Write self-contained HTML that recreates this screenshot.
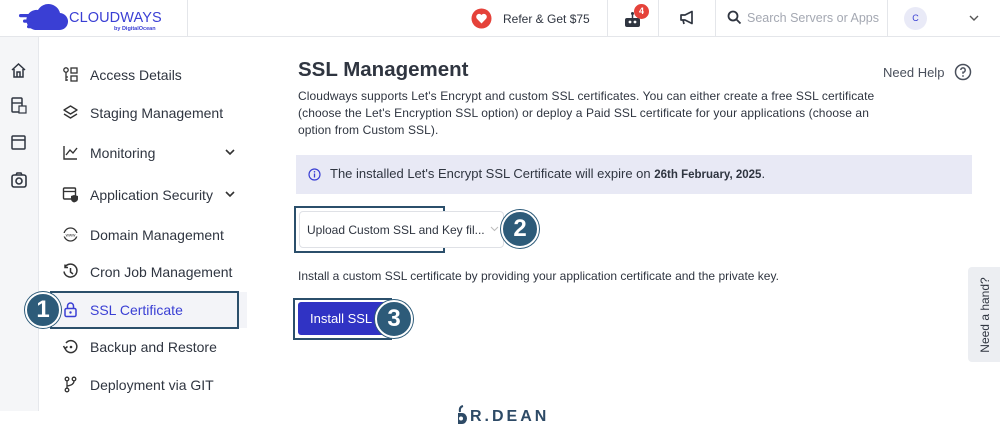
<!DOCTYPE html>
<html><head><style>
*{box-sizing:border-box;margin:0;padding:0}
body{width:1000px;height:443px;background:#fff;font-family:"Liberation Sans",sans-serif;color:#2f3540;position:relative;overflow:hidden}
.abs{position:absolute}
.hdr{left:0;top:0;width:1000px;height:37px;border-bottom:1px solid #e4e6ea;background:#fff}
.vd{top:0;width:1px;height:37px;background:#e4e6ea}
.side{left:0;top:37px;width:39px;height:374px;background:#f5f6f8;border-right:1px solid #e6e8ec}
.mi{left:62px;font-size:14px;color:#2f3540;display:flex;align-items:center}
.mi svg{width:17px;height:17px;margin-right:11px}
.num{border-radius:50%;background:#2d5b79;color:#fff;font-weight:bold;border:2px solid #fff;box-shadow:0 0 0 1px #2d5b79;display:flex;align-items:center;justify-content:center;font-size:24px}
p.t{font-size:12px;line-height:17px;color:#2f3540;letter-spacing:.1px}
</style></head><body>
<div class="abs hdr"></div>
<!-- logo -->
<svg class="abs" style="left:18px;top:4px" width="50" height="28" viewBox="0 0 50 28"><path d="M17 26 H41 a8.5 8.5 0 0 0 1-17 a12 12 0 0 0-22-3 a9 9 0 0 0-3 20z" fill="#3a3fd4"/><rect x="1" y="10" width="18" height="3.2" rx="1.6" fill="#3a3fd4"/><rect x="5" y="15.5" width="14" height="3.2" rx="1.6" fill="#3a3fd4"/><rect x="9" y="21" width="10" height="3.2" rx="1.6" fill="#3a3fd4"/></svg>
<div class="abs" style="left:69px;top:10px;font-size:14.5px;color:#3a3fd4;letter-spacing:.1px">CLOUDWAYS</div>
<div class="abs" style="left:114px;top:26px;font-size:5.5px;color:#3a3fd4;font-weight:bold">by DigitalOcean</div>
<div class="abs vd" style="left:187px"></div>
<svg class="abs" style="left:471px;top:8px" width="21" height="21" viewBox="0 0 21 21"><circle cx="10.5" cy="10.5" r="10" fill="#e5423a"/><path d="M10.5 15.5 L5.8 10.6 a2.8 2.8 0 0 1 4.7-3.6 a2.8 2.8 0 0 1 4.7 3.6z" fill="#fff"/></svg>
<div class="abs" style="left:503px;top:12px;font-size:12px;color:#2f3540">Refer &amp; Get $75</div>
<div class="abs vd" style="left:607px"></div>
<svg class="abs" style="left:623px;top:10px" width="20" height="20" viewBox="0 0 20 20"><rect x="2" y="8" width="15" height="9" rx="2" fill="#2f3540"/><circle cx="7" cy="12" r="1.4" fill="#fff"/><circle cx="12" cy="12" r="1.4" fill="#fff"/><line x1="9.5" y1="8" x2="9.5" y2="4" stroke="#2f3540" stroke-width="1.5"/><circle cx="9.5" cy="3.5" r="1.5" fill="#2f3540"/></svg>
<div class="abs" style="left:634px;top:4px;width:15px;height:15px;border-radius:50%;background:#e5423a;color:#fff;font-size:9px;font-weight:bold;text-align:center;line-height:15px">4</div>
<div class="abs vd" style="left:658px"></div>
<svg class="abs" style="left:679px;top:10px" width="17" height="16" viewBox="0 0 17 16"><path d="M2 5 H6 L13 1.5 V13.5 L6 10 H2z M4 10 L5 14" fill="none" stroke="#2f3540" stroke-width="1.7" stroke-linejoin="round"/></svg>
<div class="abs vd" style="left:715px"></div>
<svg class="abs" style="left:727px;top:10px" width="15" height="15" viewBox="0 0 15 15"><circle cx="6" cy="6" r="4.5" fill="none" stroke="#2f3540" stroke-width="1.8"/><line x1="9.5" y1="9.5" x2="13.5" y2="13.5" stroke="#2f3540" stroke-width="1.8"/></svg>
<div class="abs" style="left:747px;top:11px;font-size:12.5px;color:#a4a8b2">Search Servers or Apps</div>
<div class="abs vd" style="left:887px"></div>
<div class="abs" style="left:904px;top:7px;width:23px;height:23px;border-radius:50%;background:#e9eaf7;color:#3a3fd4;font-size:9px;text-align:center;line-height:23px">C</div>
<svg class="abs" style="left:969px;top:15px" width="10" height="7" viewBox="0 0 10 7"><path d="M1 1 L5 5 L9 1" fill="none" stroke="#555" stroke-width="1.4"/></svg>

<div class="abs side"></div>
<svg class="abs" style="left:10px;top:62px" width="17" height="17" viewBox="0 0 17 17"><path d="M2 8 L8.5 2 L15 8 M4 7 V15 H13 V7 M7 15 V10 H10 V15" fill="none" stroke="#2f3540" stroke-width="1.5"/></svg>
<svg class="abs" style="left:10px;top:96px" width="17" height="18" viewBox="0 0 17 18"><rect x="2" y="2" width="10" height="14" rx="1" fill="none" stroke="#2f3540" stroke-width="1.5"/><line x1="2" y1="7" x2="12" y2="7" stroke="#2f3540" stroke-width="1.4"/><rect x="9" y="10" width="7" height="7" fill="#f5f6f8" stroke="#2f3540" stroke-width="1.2"/></svg>
<svg class="abs" style="left:10px;top:133px" width="17" height="18" viewBox="0 0 17 18"><rect x="2" y="3" width="13" height="13" rx="1" fill="none" stroke="#2f3540" stroke-width="1.5"/><line x1="2" y1="7" x2="15" y2="7" stroke="#2f3540" stroke-width="1.5"/></svg>
<svg class="abs" style="left:10px;top:171px" width="18" height="18" viewBox="0 0 18 18"><rect x="2" y="4" width="14" height="12" rx="2" fill="none" stroke="#2f3540" stroke-width="1.6"/><circle cx="9" cy="10" r="3" fill="none" stroke="#2f3540" stroke-width="1.6"/><path d="M6 4 L7 2 H11 L12 4" fill="none" stroke="#2f3540" stroke-width="1.5"/></svg>

<!-- menu -->
<div class="abs" style="left:48px;top:292px;width:199px;height:36px;background:#f3f4f8"></div>
<div class="abs" style="left:50px;top:291px;width:189px;height:38px;border:2px solid #2b4f6b"></div>
<div class="abs mi" style="top:66px"><svg viewBox="0 0 17 17"><circle cx="4" cy="4" r="2.2" fill="none" stroke="#333" stroke-width="1.3"/><path d="M4 6 V15 M4 11 H6 M4 14 H6" stroke="#333" stroke-width="1.3"/><rect x="9" y="2" width="6" height="5" fill="none" stroke="#333" stroke-width="1.3"/><rect x="9" y="10" width="6" height="5" fill="none" stroke="#333" stroke-width="1.3"/></svg>Access Details</div>
<div class="abs mi" style="top:104px"><svg viewBox="0 0 17 17"><path d="M8.5 2 L15 6 L8.5 10 L2 6z M2 10 L8.5 14 L15 10" fill="none" stroke="#333" stroke-width="1.4" stroke-linejoin="round"/></svg>Staging Management</div>
<div class="abs mi" style="top:144px"><svg viewBox="0 0 17 17"><path d="M2 2 V15 H15 M4 11 L8 6 L11 9 L15 4" fill="none" stroke="#333" stroke-width="1.4"/></svg>Monitoring</div>
<svg class="abs" style="left:225px;top:149px" width="10" height="7" viewBox="0 0 10 7"><path d="M1 1 L5 5 L9 1" fill="none" stroke="#333" stroke-width="1.6"/></svg>
<div class="abs mi" style="top:186px"><svg viewBox="0 0 17 17"><rect x="1.5" y="2" width="12" height="11" rx="1" fill="none" stroke="#333" stroke-width="1.4"/><line x1="1.5" y1="5.5" x2="13.5" y2="5.5" stroke="#333" stroke-width="1.3"/><path d="M12 9 L16 10 V13 Q16 15.5 12 16.5 Q9 15.5 9 13 V10z" fill="#333"/></svg>Application Security</div>
<svg class="abs" style="left:225px;top:191px" width="10" height="7" viewBox="0 0 10 7"><path d="M1 1 L5 5 L9 1" fill="none" stroke="#333" stroke-width="1.6"/></svg>
<div class="abs mi" style="top:226px"><svg viewBox="0 0 17 17"><circle cx="8.5" cy="8.5" r="6.5" fill="none" stroke="#333" stroke-width="1.3"/><rect x="0" y="7" width="17" height="3.5" fill="#fff"/><text x="8.5" y="10.3" font-size="4.5" text-anchor="middle" fill="#333" font-family="Liberation Sans">www</text></svg>Domain Management</div>
<div class="abs mi" style="top:263px"><svg viewBox="0 0 17 17"><path d="M3 4 A6.5 6.5 0 1 1 2 8.5 M3 1.5 V4.5 H6 M8.5 5 V9 L11 11" fill="none" stroke="#333" stroke-width="1.5"/></svg>Cron Job Management</div>
<div class="abs mi" style="top:301px;color:#3a3fd4"><svg viewBox="0 0 17 17"><rect x="3" y="7.5" width="11" height="8" rx="1.5" fill="none" stroke="#3a3fd4" stroke-width="1.5"/><path d="M5.5 7.5 V5 a3 3 0 0 1 6 0 V7.5" fill="none" stroke="#3a3fd4" stroke-width="1.5"/><circle cx="8.5" cy="11.5" r="1.2" fill="#3a3fd4"/></svg>SSL Certificate</div>
<div class="abs mi" style="top:338px"><svg viewBox="0 0 17 17"><path d="M3 10 A6 6 0 1 0 4 5 M1.5 8 L3 10.5 L5.5 8.5" fill="none" stroke="#333" stroke-width="1.5"/><circle cx="9" cy="9" r="1.3" fill="#333"/></svg>Backup and Restore</div>
<div class="abs mi" style="top:376px"><svg viewBox="0 0 17 17"><circle cx="5" cy="3" r="1.8" fill="none" stroke="#333" stroke-width="1.3"/><circle cx="5" cy="14" r="1.8" fill="none" stroke="#333" stroke-width="1.3"/><circle cx="12" cy="3" r="1.8" fill="none" stroke="#333" stroke-width="1.3"/><path d="M5 5 V12 M12 5 Q12 9 5 10" fill="none" stroke="#333" stroke-width="1.3"/></svg>Deployment via GIT</div>
<div class="abs num" style="left:25px;top:292px;width:36px;height:36px">1</div>

<!-- main -->
<div class="abs" style="left:298px;top:58px;font-size:20.5px;font-weight:bold;color:#2f3540">SSL Management</div>
<div class="abs" style="left:883px;top:65px;font-size:13px;color:#4a505c">Need Help</div>
<svg class="abs" style="left:954px;top:63px" width="18" height="18" viewBox="0 0 18 18"><circle cx="9" cy="9" r="7.5" fill="none" stroke="#4a505c" stroke-width="1.5"/><path d="M6.8 7 a2.2 2.2 0 1 1 2.2 2.3 V10.8" fill="none" stroke="#4a505c" stroke-width="1.5"/><circle cx="9" cy="13" r="0.9" fill="#4a505c"/></svg>
<p class="abs t" style="left:298px;top:88px;width:580px">Cloudways supports Let's Encrypt and custom SSL certificates. You can either create a free SSL certificate (choose the Let's Encryption SSL option) or deploy a Paid SSL certificate for your applications (choose an option from Custom SSL).</p>
<div class="abs" style="left:296px;top:155px;width:676px;height:39px;background:#e8e9f5"></div>
<svg class="abs" style="left:308px;top:168px" width="13" height="13" viewBox="0 0 13 13"><circle cx="6.5" cy="6.5" r="5.5" fill="none" stroke="#3a3fd4" stroke-width="1.2"/><line x1="6.5" y1="5.5" x2="6.5" y2="9.5" stroke="#3a3fd4" stroke-width="1.3"/><circle cx="6.5" cy="3.8" r=".8" fill="#3a3fd4"/></svg>
<div class="abs" style="left:330px;top:166px;font-size:13px;color:#2f3540">The installed Let's Encrypt SSL Certificate will expire on <b style="font-size:11.5px">26th February, 2025</b>.</div>
<div class="abs" style="left:294px;top:206px;width:151px;height:47px;border:2px solid #2b4f6b"></div>
<div class="abs" style="left:299px;top:211px;width:205px;height:37px;border:1px solid #dfe1e6;border-radius:4px;background:#fff"></div>
<div class="abs" style="left:307px;top:223px;font-size:12px;color:#2f3540">Upload Custom SSL and Key fil...</div>
<svg class="abs" style="left:490px;top:226px" width="9" height="6" viewBox="0 0 9 6"><path d="M1 1 L4.5 4.5 L8 1" fill="none" stroke="#bbb" stroke-width="1"/></svg>
<div class="abs num" style="left:501px;top:210px;width:38px;height:38px">2</div>
<div class="abs" style="left:298px;top:269px;font-size:12px;color:#2f3540">Install a custom SSL certificate by providing your application certificate and the private key.</div>
<div class="abs" style="left:293px;top:298px;width:99px;height:42px;border:2px solid #2b4f6b"></div>
<div class="abs" style="left:298px;top:302px;width:92px;height:33px;background:#3033c4;border-radius:3px;color:#fff;font-size:13px;padding:9px 0 0 12px">Install SSL</div>
<div class="abs num" style="left:375px;top:300px;width:38px;height:38px">3</div>
<div class="abs" style="left:968px;top:267px;width:34px;height:95px;background:#eceef2;border-radius:4px 0 0 4px"></div>
<div class="abs" style="left:940px;top:308px;width:90px;transform:rotate(-90deg);font-size:12px;color:#2f3540;text-align:center">Need a hand?</div>
<!-- DR DEAN -->
<svg class="abs" style="left:455px;top:404px" width="14" height="22" viewBox="0 0 14 22"><path d="M3 9 H7 a5 5.5 0 0 1 0 11 H3z" fill="#2d4a66"/><circle cx="6" cy="14.5" r="2" fill="#fff"/><path d="M5 8 Q4 3 8 2" fill="none" stroke="#2d4a66" stroke-width="2"/></svg>
<div class="abs" style="left:470px;top:408px;font-size:16px;font-weight:bold;color:#2d4a66;letter-spacing:3px">R.DEAN</div>
</body></html>
